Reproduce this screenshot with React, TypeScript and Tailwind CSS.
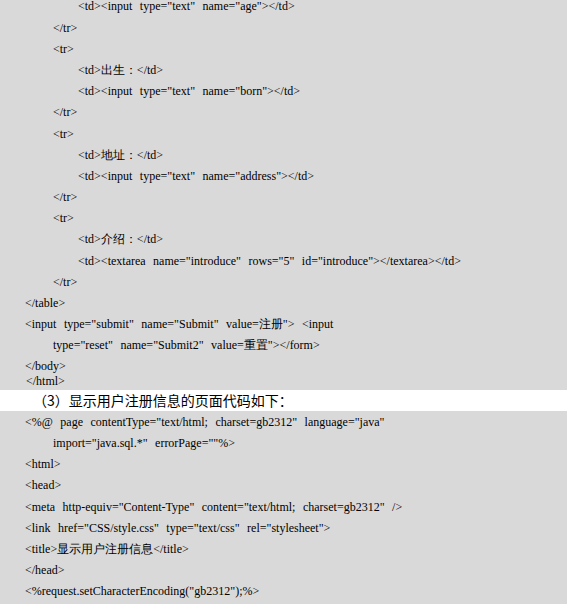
import React from 'react';

type Line = { indent: number; text: string };

const top: Line[] = [
  { indent: 2, text: '<td><input type="text" name="age"></td>' },
  { indent: 1, text: '</tr>' },
  { indent: 1, text: '<tr>' },
  { indent: 2, text: '<td>出生：</td>' },
  { indent: 2, text: '<td><input type="text" name="born"></td>' },
  { indent: 1, text: '</tr>' },
  { indent: 1, text: '<tr>' },
  { indent: 2, text: '<td>地址：</td>' },
  { indent: 2, text: '<td><input type="text" name="address"></td>' },
  { indent: 1, text: '</tr>' },
  { indent: 1, text: '<tr>' },
  { indent: 2, text: '<td>介绍：</td>' },
  { indent: 2, text: '<td><textarea name="introduce" rows="5" id="introduce"></textarea></td>' },
  { indent: 1, text: '</tr>' },
  { indent: 0, text: '</table>' },
  { indent: 0, text: '<input type="submit" name="Submit" value=注册"> <input' },
  { indent: 1, text: 'type="reset" name="Submit2" value=重置"></form>' },
];

const bottom: Line[] = [
  { indent: 0, text: '<%@ page contentType="text/html; charset=gb2312" language="java"' },
  { indent: 1, text: 'import="java.sql.*" errorPage=""%>' },
  { indent: 0, text: '<html>' },
  { indent: 0, text: '<head>' },
  { indent: 0, text: '<meta http-equiv="Content-Type" content="text/html; charset=gb2312" />' },
  { indent: 0, text: '<link href="CSS/style.css" type="text/css" rel="stylesheet">' },
  { indent: 0, text: '<title>显示用户注册信息</title>' },
  { indent: 0, text: '</head>' },
  { indent: 0, text: '<%request.setCharacterEncoding("gb2312");%>' },
];

const indents = ['pl-[25px]', 'pl-[53px]', 'pl-[78px]'];

function CodeLine({ line }: { line: Line }) {
  return (
    <div className={`${indents[line.indent]} h-[21.2px] pt-[1px] leading-[21.2px] whitespace-nowrap`}>
      {line.text}
    </div>
  );
}

export default function App() {
  return (
    <div className="w-[567px] h-[604px] overflow-hidden bg-[#d9d9d9] text-black text-[12px] [word-spacing:4.5px] [font-family:Liberation_Serif]">
      <div className="-mt-[4.6px]">
        {top.map((l, i) => (
          <CodeLine key={i} line={l} />
        ))}
        <div className="pl-[25px] mt-[1px] h-[16px] pt-[1px] leading-[16px]">{'</body>'}</div>
        <div className="pl-[26px] h-[14px] pt-[1px] leading-[14px]">{'</html>'}</div>
      </div>
      <div className="mt-[3.2px] h-[21px] bg-white pl-[33px] leading-[21px] text-[14px] [word-spacing:0] [font-family:Noto_Sans_CJK_SC]">
        （3）显示用户注册信息的页面代码如下：
      </div>
      {bottom.map((l, i) => (
        <CodeLine key={i} line={l} />
      ))}
    </div>
  );
}
